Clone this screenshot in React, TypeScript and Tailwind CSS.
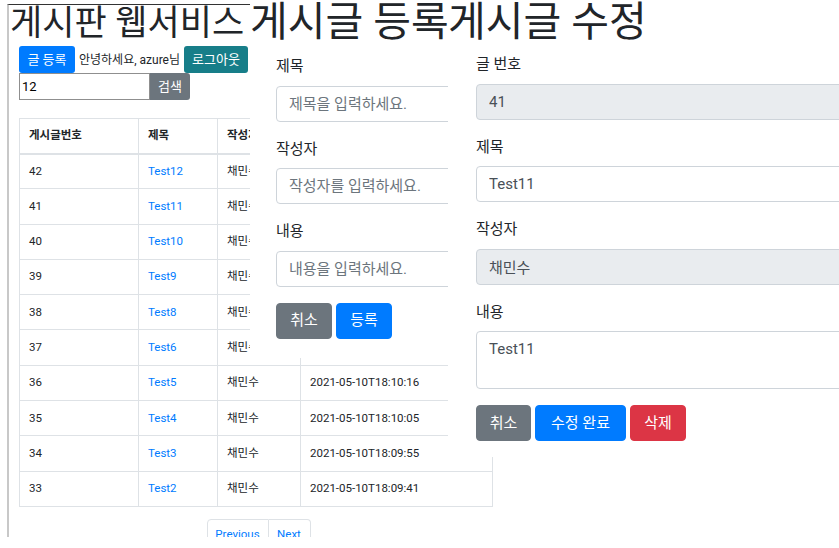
// 게시판: 목록 + 글 등록 + 글 수정 화면

const posts = [
  { id: 42, title: 'Test12', writer: '채민수', date: '2021-05-10T18:12:40' },
  { id: 41, title: 'Test11', writer: '채민수', date: '2021-05-10T18:12:21' },
  { id: 40, title: 'Test10', writer: '채민수', date: '2021-05-10T18:11:58' },
  { id: 39, title: 'Test9', writer: '채민수', date: '2021-05-10T18:11:30' },
  { id: 38, title: 'Test8', writer: '채민수', date: '2021-05-10T18:11:02' },
  { id: 37, title: 'Test6', writer: '채민수', date: '2021-05-10T18:10:40' },
  { id: 36, title: 'Test5', writer: '채민수', date: '2021-05-10T18:10:16' },
  { id: 35, title: 'Test4', writer: '채민수', date: '2021-05-10T18:10:05' },
  { id: 34, title: 'Test3', writer: '채민수', date: '2021-05-10T18:09:55' },
  { id: 33, title: 'Test2', writer: '채민수', date: '2021-05-10T18:09:41' },
]

function Field({ label, children }: { label: string; children: React.ReactNode }) {
  return (
    <div className="mb-[16px]">
      <label className="block text-[15px] leading-[22.5px] mb-[8px] text-[#212529]">{label}</label>
      {children}
    </div>
  )
}

const inputCls =
  'block w-[420px] h-[36px] border border-[#ced4da] rounded-[4px] px-[12px] text-[15px] text-[#495057] placeholder:text-[#6c757d] outline-none'

const btnCls = 'h-[36px] border text-white text-[15px] rounded-[4px] text-center'

function BoardList() {
  return (
    <div className="ml-[7px] mt-[4px] h-[533px] border-l-2 border-t border-l-[#c8c8c8] border-t-[#333]">
      <h1 className="text-[35px] leading-[38px] text-[#212529] pl-[1px] whitespace-nowrap">게시판 웹서비스</h1>
      <div className="pl-[10px] mt-[3px]">
        <div className="flex items-center h-[27px]">
          <button className="w-[56px] h-[27px] bg-[#007bff] text-white text-[13px] rounded-[3px]">글 등록</button>
          <span className="w-[109px] pl-[4px] text-[12px] text-[#212529] whitespace-nowrap overflow-hidden">
            안녕하세요, azure님
          </span>
          <button className="w-[64px] h-[27px] bg-[#177e89] text-white text-[13px] rounded-[3px]">로그아웃</button>
        </div>
        <div className="flex h-[27px]">
          <input
            className="w-[131px] h-[27px] border border-[#8f8f8f] px-[2px] text-[13px] text-black outline-none"
            defaultValue="12"
          />
          <button className="w-[40px] h-[27px] bg-[#6c757d] text-white text-[13px] rounded-r-[3px]">검색</button>
        </div>

        <table className="mt-[18px] w-[473px] border-collapse border border-[#dee2e6] text-[11.5px] text-[#212529] table-fixed">
          <colgroup>
            <col className="w-[119px]" />
            <col className="w-[79px]" />
            <col className="w-[83px]" />
            <col className="w-[192px]" />
          </colgroup>
          <thead>
            <tr className="h-[35px]">
              <th className="border border-[#dee2e6] border-b-2 px-[9px] text-left font-bold">게시글번호</th>
              <th className="border border-[#dee2e6] border-b-2 px-[9px] text-left font-bold">제목</th>
              <th className="border border-[#dee2e6] border-b-2 px-[9px] text-left font-bold">작성자</th>
              <th className="border border-[#dee2e6] border-b-2 px-[9px] text-left font-bold">작성일</th>
            </tr>
          </thead>
          <tbody>
            {posts.map((p) => (
              <tr key={p.id} className="h-[35.3px]">
                <td className="border border-[#dee2e6] px-[9px]">{p.id}</td>
                <td className="border border-[#dee2e6] px-[9px] text-[#007bff]">{p.title}</td>
                <td className="border border-[#dee2e6] px-[9px]">{p.writer}</td>
                <td className="border border-[#dee2e6] px-[9px]">{p.date}</td>
              </tr>
            ))}
          </tbody>
        </table>

        <div className="w-[473px] mt-[12px] flex justify-center">
          <div className="flex ml-[6px] text-[11.5px] text-[#007bff]">
            <span className="w-[62px] text-center py-[5px] leading-[18px] border border-[#dee2e6] rounded-l-[4px]">Previous</span>
            <span className="w-[42px] text-center py-[5px] leading-[18px] border border-l-0 border-[#dee2e6] rounded-r-[4px]">Next</span>
          </div>
        </div>
      </div>
    </div>
  )
}

function WriteForm() {
  return (
    <div className="absolute left-[250px] top-0 w-[198px] h-[358px] bg-white z-10 overflow-hidden">
      <h1 className="text-[41px] leading-[45px] text-[#212529] whitespace-nowrap mb-[10px]">게시글 등록</h1>
      <div className="pl-[26px]">
        <Field label="제목">
          <input className={inputCls} placeholder="제목을 입력하세요." />
        </Field>
        <Field label="작성자">
          <input className={inputCls} placeholder="작성자를 입력하세요." />
        </Field>
        <Field label="내용">
          <input className={inputCls} placeholder="내용을 입력하세요." />
        </Field>
        <div className="flex gap-[4px]">
          <button className={`${btnCls} w-[56px] bg-[#6c757d] border-[#6c757d]`}>취소</button>
          <button className={`${btnCls} w-[56px] bg-[#007bff] border-[#007bff]`}>등록</button>
        </div>
      </div>
    </div>
  )
}

function EditForm() {
  return (
    <div className="absolute left-[448px] top-0 w-[391px] h-[457px] bg-white z-20 overflow-hidden">
      <h1 className="text-[41px] leading-[45px] text-[#212529] whitespace-nowrap mb-[8px]">게시글 수정</h1>
      <div className="pl-[28px]">
        <Field label="글 번호">
          <input className={`${inputCls} bg-[#e9ecef]`} defaultValue="41" disabled />
        </Field>
        <Field label="제목">
          <input className={inputCls} defaultValue="Test11" />
        </Field>
        <Field label="작성자">
          <input className={`${inputCls} bg-[#e9ecef]`} defaultValue="채민수" disabled />
        </Field>
        <Field label="내용">
          <textarea
            className="block w-[420px] h-[58px] border border-[#ced4da] rounded-[4px] px-[12px] py-[6px] text-[15px] leading-[22.5px] text-[#495057] resize-none outline-none"
            defaultValue="Test11"
          />
        </Field>
        <div className="flex gap-[4px]">
          <button className={`${btnCls} w-[55px] bg-[#6c757d] border-[#6c757d]`}>취소</button>
          <button className={`${btnCls} w-[91px] bg-[#007bff] border-[#007bff]`}>수정 완료</button>
          <button className={`${btnCls} w-[56px] bg-[#dc3545] border-[#dc3545]`}>삭제</button>
        </div>
      </div>
    </div>
  )
}

export default function App() {
  return (
    <div className="relative w-[839px] h-[537px] overflow-hidden bg-white font-['Roboto','Noto_Sans_CJK_KR',sans-serif]">
      <BoardList />
      <WriteForm />
      <EditForm />
    </div>
  )
}
